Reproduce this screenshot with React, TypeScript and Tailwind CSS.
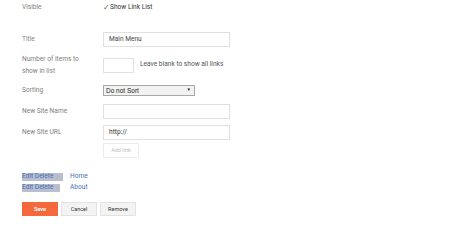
export default function App() {
  const links = ["Home", "About"];
  return (
    <div className="w-[474px] h-[221px] bg-white overflow-hidden pl-[22px] font-['Roboto',sans-serif] text-[6.6px] text-[#808080] whitespace-nowrap">
      <div className="flex items-center h-[16px]">
        <div className="w-[81px]">Visible</div>
        <label className="flex items-center text-[#333]">
          <span className="text-[#666] text-[8px] leading-none">✓</span>Show Link List
        </label>
      </div>

      <div className="flex items-center mt-[16px] h-[15px]">
        <div className="w-[81px]">Title</div>
        <div className="w-[127px] h-[15px] border border-[#e0e0e0] flex items-center px-[5px] text-[#444]">Main Menu</div>
      </div>

      <div className="flex items-center mt-[10px] h-[16px]">
        <div className="w-[81px] leading-[12px]">Number of items to<br />show in list</div>
        <div className="w-[31px] h-[15px] border border-[#e0e0e0]" />
        <span className="ml-[6px] text-[#555]">Leave blank to show all links</span>
      </div>

      <div className="flex items-center mt-[12px] h-[11px]">
        <div className="w-[81px]">Sorting</div>
        <div className="w-[92px] h-[11px] border border-[#a8a8a8] bg-[#f2f2f2] flex items-center justify-between px-[2px] text-[#222] font-['Liberation_Sans',sans-serif] text-[6.5px]">
          <span>Do not Sort</span>
          <span className="text-[4.5px] mr-px">▼</span>
        </div>
      </div>

      <div className="flex items-center mt-[8px] h-[15px]">
        <div className="w-[81px]">New Site Name</div>
        <div className="w-[127px] h-[15px] border border-[#e0e0e0]" />
      </div>

      <div className="flex items-center mt-[6px] h-[15px]">
        <div className="w-[81px]">New Site URL</div>
        <div className="w-[127px] h-[15px] border border-[#e0e0e0] flex items-center px-[5px] text-[#333]">http://</div>
      </div>

      <div className="flex mt-[3px] ml-[81px]">
        <div className="w-[36px] h-[15px] border border-[#ececec] flex items-center justify-center text-[#bbb] text-[5.5px]">Add link</div>
      </div>

      <div className="flex flex-col mt-[15px] gap-[3px]">
        {links.map((name, i) => (
          <div key={name} className="flex items-center h-[8px]">
            <div className="w-[48px] flex items-center">
              <span className={`bg-[#b9bfce] text-[#4a6fb5] flex items-center h-[8px] ${i === 0 ? "w-[41px]" : "w-[38px]"}`}>
                Edit Delete<span className="ml-[3px] text-[#a0a0a0] text-[4.5px]">↕</span>
              </span>
            </div>
            <span className="text-[#4a6fb5]">{name}</span>
          </div>
        ))}
      </div>

      <div className="flex gap-[3px] mt-[10px]">
        <button className="w-[36px] h-[14px] bg-[#f4683c] text-white text-[5.5px] font-bold flex items-center justify-center">Save</button>
        <button className="w-[36px] h-[14px] bg-[#f3f3f3] border border-[#e2e2e2] text-[#333] text-[5.5px] flex items-center justify-center">Cancel</button>
        <button className="w-[36px] h-[14px] bg-[#f3f3f3] border border-[#e2e2e2] text-[#333] text-[5.5px] flex items-center justify-center">Remove</button>
      </div>
    </div>
  );
}
